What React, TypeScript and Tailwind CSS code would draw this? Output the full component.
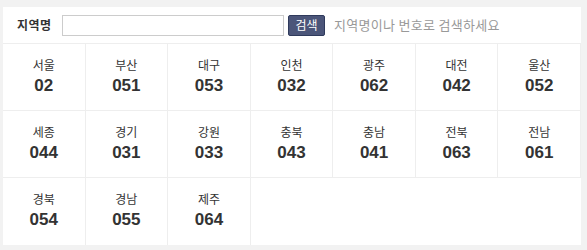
import React from "react";

const regions = [
  { name: "서울", code: "02" },
  { name: "부산", code: "051" },
  { name: "대구", code: "053" },
  { name: "인천", code: "032" },
  { name: "광주", code: "062" },
  { name: "대전", code: "042" },
  { name: "울산", code: "052" },
  { name: "세종", code: "044" },
  { name: "경기", code: "031" },
  { name: "강원", code: "033" },
  { name: "충북", code: "043" },
  { name: "충남", code: "041" },
  { name: "전북", code: "063" },
  { name: "전남", code: "061" },
  { name: "경북", code: "054" },
  { name: "경남", code: "055" },
  { name: "제주", code: "064" },
];

const kr = "font-['Noto_Sans_CJK_KR',sans-serif]";

export default function App() {
  return (
    <div className="h-[250px] w-[587px] bg-[#f2f2f2] pl-[3px] pt-[7px]">
      <div className="h-[238px] w-[578px] bg-white">
        {/* Search bar */}
        <div className="flex h-[37px] items-center border-b border-[#eeeeee] pl-[14px]">
          <span className={`${kr} w-[36px] text-[12px] font-bold tracking-[0.5px] text-[#333]`}>지역명</span>
          <input
            type="text"
            className="ml-[9px] h-[21px] w-[222px] border border-[#cccccc] bg-white px-1 outline-none"
          />
          <button
            className={`${kr} ml-[4px] flex h-[21px] w-[37px] items-center justify-center rounded-[2px] border border-[#2f3a5c] bg-[#4b5579] text-[12px] leading-none text-white`}
          >
            검색
          </button>
          <span className={`${kr} ml-[9px] text-[13px] tracking-[0.3px] text-[#999]`}>지역명이나 번호로 검색하세요</span>
        </div>

        {/* Region grid */}
        <div className="grid grid-cols-7">
          {regions.map((r, i) => (
            <div
              key={r.code}
              className={`flex h-[67px] flex-col items-center border-r border-[#eeeeee] pt-[13px] ${
                i < 14 ? "border-b" : ""
              }`}
            >
              <span className={`${kr} text-[12px] leading-[16px] text-[#333]`}>{r.name}</span>
              <span className="mt-[3px] font-['Liberation_Sans',Arial,sans-serif] text-[17px] font-bold leading-[20px] text-[#333]">
                {r.code}
              </span>
            </div>
          ))}
        </div>
      </div>
    </div>
  );
}
